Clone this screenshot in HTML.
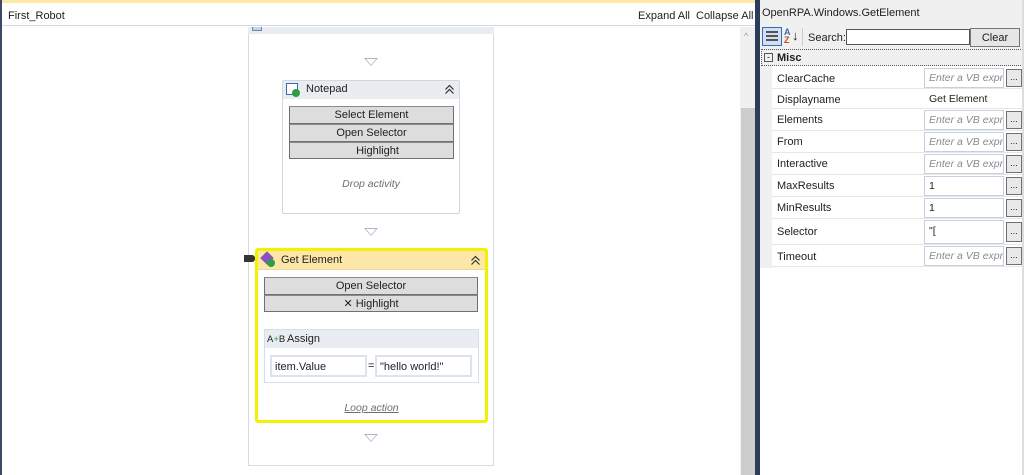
<!DOCTYPE html>
<html><head><meta charset="utf-8"><style>
*{box-sizing:border-box;margin:0;padding:0}
body{width:1024px;height:475px;overflow:hidden;background:#fff;font-family:"Segoe UI","Liberation Sans",sans-serif;font-size:11px;color:#1e1e1e;position:relative}
.a{position:absolute}
.btn{position:absolute;background:#dddddd;border:1px solid #707070;border-top-color:#8a8a8a;text-align:center;line-height:17px;font-size:11px}
.tri{position:absolute;width:0;height:0;border-left:7px solid transparent;border-right:7px solid transparent;border-top:8px solid #a9b4c4}
.tri::after{content:"";position:absolute;left:-5px;top:-7px;border-left:5px solid transparent;border-right:5px solid transparent;border-top:6px solid #fff}
.row{position:absolute;left:772px;width:250px;border-bottom:1px solid #e6e6e6}
.row .n{position:absolute;left:5px;font-size:11px}
.row .v{position:absolute;left:152px;width:80px;border:1px solid #c6d0de;background:#fff;font-size:10.5px;padding-left:4px;white-space:nowrap;overflow:hidden}
.row .i{color:#8a8a8a;font-style:italic}
.row .d{position:absolute;left:234px;width:16px;border:1px solid #707070;background:#e8e8e8;font-size:9px;text-align:center;line-height:12px}
</style></head><body>
<div class="a" style="left:0;top:0;width:760px;height:3px;background:#fde9a5"></div>
<div class="a" style="left:0;top:0;width:2px;height:475px;background:#3c4a63"></div>
<div class="a" style="left:2px;top:3px;width:753px;height:23px;border-bottom:1px solid #d3d9e6;background:#fff"></div>
<div class="a" style="left:8px;top:10px;font-size:11px">First_Robot</div>
<div class="a" style="left:638px;top:10px;font-size:11px">Expand All</div>
<div class="a" style="left:696px;top:10px;font-size:11px">Collapse All</div>
<!-- scrollbar -->
<div class="a" style="left:740px;top:27px;width:15px;height:448px;background:#f0f0f0"></div>
<div class="a" style="left:741px;top:108px;width:14px;height:367px;background:#cdcdcd"></div>
<div class="a" style="left:744px;top:31px;font-size:9px;color:#999">^</div>
<div class="a" style="left:755px;top:0;width:5px;height:475px;background:#2c3d5c"></div>
<!-- sequence -->
<div class="a" style="left:248px;top:27px;width:246px;height:439px;border:1px solid #d5dbe6;border-top:none"></div>
<div class="a" style="left:248px;top:27px;width:246px;height:7px;background:#e9ecf1"></div>
<div class="a" style="left:252px;top:27px;width:10px;height:4px;background:#c9d6ea;border:1px solid #6b87b7;border-top:none"></div>
<div class="tri" style="left:364px;top:58px"></div>
<div class="tri" style="left:364px;top:228px"></div>
<div class="tri" style="left:364px;top:434px"></div>
<!-- notepad -->
<div class="a" style="left:282px;top:80px;width:178px;height:134px;border:1px solid #d0d7e2;border-radius:2px;background:#fff"></div>
<div class="a" style="left:283px;top:81px;width:176px;height:18px;background:#e9ecf1"></div>
<div class="a" style="left:286px;top:83px;width:12px;height:12px;border:1.5px solid #3a6bb0;background:#fff"></div>
<div class="a" style="left:292px;top:89px;width:8px;height:8px;border-radius:50%;background:#2e9e3e"></div>
<div class="a" style="left:306px;top:83px;font-size:11px">Notepad</div>
<svg class="a" style="left:444px;top:84px" width="11" height="11"><path d="M1.5 5.5L5.5 1.5L9.5 5.5M1.5 9.5L5.5 5.5L9.5 9.5" fill="none" stroke="#333" stroke-width="1.2"/></svg>
<div class="btn" style="left:289px;top:106px;width:165px;height:18px">Select Element</div>
<div class="btn" style="left:289px;top:124px;width:165px;height:18px">Open Selector</div>
<div class="btn" style="left:289px;top:142px;width:165px;height:17px;padding-left:12px;line-height:16px">Highlight</div>
<div class="a" style="left:282px;top:178px;width:178px;text-align:center;font-style:italic;color:#6d6d6d;font-size:10.5px">Drop activity</div>
<!-- get element -->
<div class="a" style="left:244px;top:255px;width:11px;height:7px;background:#333;border-radius:0 3px 3px 0"></div>
<div class="a" style="left:255px;top:248px;width:233px;height:175px;border:3px solid #f2f200;border-radius:3px;background:#fff"></div>
<div class="a" style="left:258px;top:251px;width:227px;height:19px;background:#fde7a8;border-bottom:1px solid #e8d8a0"></div>
<div class="a" style="left:261px;top:252px;width:12px;height:12px;background:#8a52c4;transform:rotate(45deg) scale(.8)"></div>
<div class="a" style="left:267px;top:259px;width:8px;height:8px;border-radius:50%;background:#2e9e3e"></div>
<div class="a" style="left:281px;top:254px;font-size:11px">Get Element</div>
<svg class="a" style="left:470px;top:255px" width="11" height="11"><path d="M1.5 5.5L5.5 1.5L9.5 5.5M1.5 9.5L5.5 5.5L9.5 9.5" fill="none" stroke="#333" stroke-width="1.2"/></svg>
<div class="btn" style="left:264px;top:277px;width:214px;height:18px">Open Selector</div>
<div class="btn" style="left:264px;top:295px;width:214px;height:17px;line-height:16px">✕ Highlight</div>
<div class="a" style="left:264px;top:329px;width:215px;height:54px;border:1px solid #d8dee8;background:#fff"></div>
<div class="a" style="left:265px;top:330px;width:213px;height:18px;background:#e9ecf1"></div>
<div class="a" style="left:267px;top:334px;font-size:9.5px">A<span style="color:#2e9e3e">+</span>B</div>
<div class="a" style="left:287px;top:333px;font-size:11px">Assign</div>
<div class="a" style="left:270px;top:355px;width:97px;height:22px;border:2px solid #dde3ec;padding:4px 3px;font-size:11px">item.Value</div>
<div class="a" style="left:368px;top:360px;font-size:11px">=</div>
<div class="a" style="left:375px;top:355px;width:97px;height:22px;border:2px solid #dde3ec;padding:4px 3px;font-size:11px">"hello world!"</div>
<div class="a" style="left:255px;top:402px;width:233px;text-align:center;font-style:italic;text-decoration:underline;color:#6d6d6d;font-size:10.5px">Loop action</div>
<!-- property panel -->
<div class="a" style="left:760px;top:0;width:264px;height:50px;background:#f0f0f0"></div>
<div class="a" style="left:762px;top:7px;font-size:11px">OpenRPA.Windows.GetElement</div>
<div class="a" style="left:762px;top:27px;width:20px;height:19px;border:1px solid #3a6bb0;background:#cfe0f5"></div>
<div class="a" style="left:766px;top:31px;width:12px;height:11px;background:repeating-linear-gradient(#555 0 2px,#cfe0f5 2px 4px)"></div>
<div class="a" style="left:784px;top:28px;font-size:9px;line-height:8px;color:#3a6bb0;font-weight:bold">A<br><span style="color:#c05020">Z</span></div>
<div class="a" style="left:792px;top:28px;font-size:13px">↓</div>
<div class="a" style="left:802px;top:28px;width:1px;height:18px;background:#ccc"></div>
<div class="a" style="left:808px;top:32px;font-size:11px">Search:</div>
<div class="a" style="left:846px;top:29px;width:124px;height:16px;border:1px solid #555;background:#fff"></div>
<div class="a" style="left:970px;top:28px;width:50px;height:19px;border:1px solid #777;background:#e6e6e6;text-align:center;line-height:19px;font-size:11px">Clear</div>
<div class="a" style="left:761px;top:49px;width:262px;height:17px;border:1px dotted #555;background:#f0f0f0"></div>
<div class="a" style="left:764px;top:53px;width:9px;height:9px;border:1px solid #555;font-size:9px;line-height:6px;text-align:center">-</div>
<div class="a" style="left:777px;top:52px;font-size:11px;font-weight:bold">Misc</div>
<div class="a" style="left:760px;top:66px;width:12px;height:202px;background:#f0f0f0"></div>
<div class="a" style="left:1022px;top:0;width:2px;height:475px;background:#ddd"></div>
<div class="row" style="top:67px;height:22px"><span class="n" style="top:6px">ClearCache</span><span class="v i" style="top:1px;height:20px;line-height:19px">Enter a VB expr</span><span class="d" style="top:2px;height:18px;line-height:14px">...</span></div>
<div class="row" style="top:89px;height:20px"><span class="n" style="top:5px">Displayname</span><span class="v" style="top:1px;height:18px;line-height:17px;border-color:transparent">Get Element</span></div>
<div class="row" style="top:109px;height:22px"><span class="n" style="top:5px">Elements</span><span class="v i" style="top:1px;height:20px;line-height:19px">Enter a VB expr</span><span class="d" style="top:2px;height:18px;line-height:14px">...</span></div>
<div class="row" style="top:131px;height:22px"><span class="n" style="top:5px">From</span><span class="v i" style="top:1px;height:20px;line-height:19px">Enter a VB expr</span><span class="d" style="top:2px;height:18px;line-height:14px">...</span></div>
<div class="row" style="top:153px;height:22px"><span class="n" style="top:5px">Interactive</span><span class="v i" style="top:1px;height:20px;line-height:19px">Enter a VB expr</span><span class="d" style="top:2px;height:18px;line-height:14px">...</span></div>
<div class="row" style="top:175px;height:22px"><span class="n" style="top:5px">MaxResults</span><span class="v" style="top:1px;height:20px;line-height:19px">1</span><span class="d" style="top:2px;height:18px;line-height:14px">...</span></div>
<div class="row" style="top:197px;height:22px"><span class="n" style="top:5px">MinResults</span><span class="v" style="top:1px;height:20px;line-height:19px">1</span><span class="d" style="top:2px;height:18px;line-height:14px">...</span></div>
<div class="row" style="top:219px;height:26px"><span class="n" style="top:7px">Selector</span><span class="v" style="top:1px;height:24px;line-height:21px">"[</span><span class="d" style="top:3px;height:20px;line-height:16px">...</span></div>
<div class="row" style="top:245px;height:22px"><span class="n" style="top:6px">Timeout</span><span class="v i" style="top:1px;height:20px;line-height:19px">Enter a VB expr</span><span class="d" style="top:2px;height:18px;line-height:14px">...</span></div>
</body></html>
